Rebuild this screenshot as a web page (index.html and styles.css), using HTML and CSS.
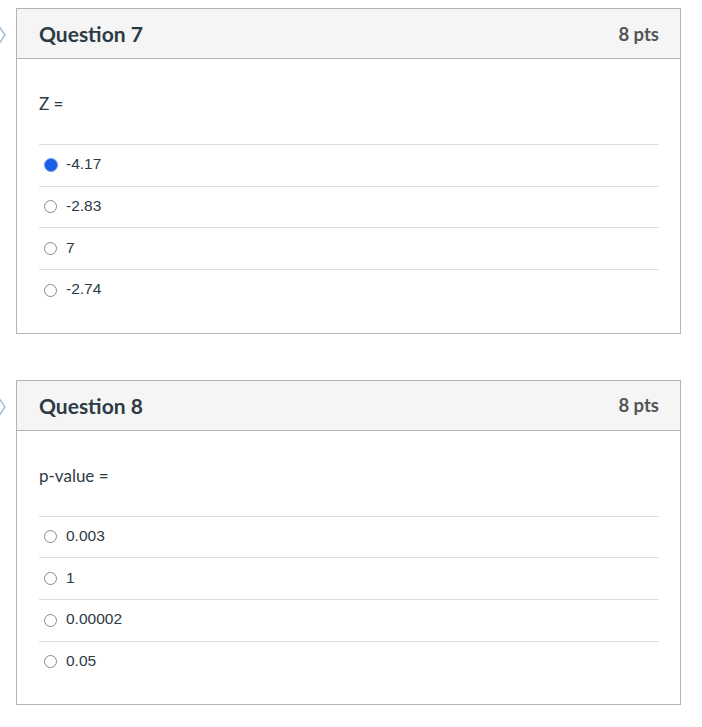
FILE: index.html
```html
<!DOCTYPE html>
<html>
<head>
<meta charset="utf-8">
<link rel="stylesheet" href="styles.css">
</head>
<body>
<div class="page">
  <div class="question">
    <svg class="flag" width="8" height="18" viewBox="0 0 8 18"><path d="M0.5 1 L6 9 L0.5 17" fill="none" stroke="#9dbbd6" stroke-width="1.4"/></svg>
    <div class="card">
      <div class="card-head">
        <span class="q-title">Question 7</span>
        <span class="q-pts">8 pts</span>
      </div>
      <div class="card-body">
        <div class="q-text">Z =</div>
        <div class="answers">
          <label class="answer"><span class="radio checked"></span><span class="a-text">-4.17</span></label>
          <label class="answer"><span class="radio"></span><span class="a-text">-2.83</span></label>
          <label class="answer"><span class="radio"></span><span class="a-text">7</span></label>
          <label class="answer"><span class="radio"></span><span class="a-text">-2.74</span></label>
        </div>
      </div>
    </div>
  </div>
  <div class="question">
    <svg class="flag" width="8" height="18" viewBox="0 0 8 18"><path d="M0.5 1 L6 9 L0.5 17" fill="none" stroke="#9dbbd6" stroke-width="1.4"/></svg>
    <div class="card">
      <div class="card-head">
        <span class="q-title">Question 8</span>
        <span class="q-pts">8 pts</span>
      </div>
      <div class="card-body">
        <div class="q-text">p-value =</div>
        <div class="answers">
          <label class="answer"><span class="radio"></span><span class="a-text">0.003</span></label>
          <label class="answer"><span class="radio"></span><span class="a-text">1</span></label>
          <label class="answer"><span class="radio"></span><span class="a-text">0.00002</span></label>
          <label class="answer"><span class="radio"></span><span class="a-text">0.05</span></label>
        </div>
      </div>
    </div>
  </div>
</div>
</body>
</html>
```

FILE: styles.css
```css
html, body {
  margin: 0;
  padding: 0;
  background: #ffffff;
}
.page {
  padding-top: 8px;
  display: flex;
  flex-direction: column;
  gap: 46px;
}
.question {
  position: relative;
  padding-left: 16px;
}
.flag {
  position: absolute;
  left: -1px;
  top: 18px;
}
.card {
  width: 663px;
  border: 1px solid #b4b4b4;
  background: #fff;
}
.card-head {
  height: 49px;
  background: #f5f5f5;
  border-bottom: 1px solid #b4b4b4;
  display: flex;
  align-items: center;
  justify-content: space-between;
  padding: 0 21px 0 22px;
  font-family: Lato, "Liberation Sans", sans-serif;
  font-weight: 700;
}
.q-title {
  font-size: 21px;
  color: #2d3b45;
}
.q-pts {
  font-size: 18.5px;
  color: #555555;
}
.card-body {
  padding: 0 21px 22px 22px;
}
.q-text {
  font-family: Lato, "Liberation Sans", sans-serif;
  font-size: 17px;
  line-height: 24px;
  color: #2d3b45;
  padding: 33px 0 28px;
}
.answers {
  display: flex;
  flex-direction: column;
}
.answer {
  height: 40.67px;
  border-top: 1px solid #dddddd;
  display: flex;
  align-items: center;
  gap: 9px;
  padding-left: 5px;
  font-family: "Liberation Sans", Arial, sans-serif;
  font-size: 15.5px;
  color: #2d3b45;
}
.radio {
  width: 11px;
  height: 11px;
  border: 1px solid #8a8a8a;
  border-radius: 50%;
  box-sizing: content-box;
  background: #fff;
  flex: none;
}
.radio.checked {
  width: 12px;
  height: 12px;
  margin-left: -0.5px;
  margin-right: -0.5px;
  border: 1px solid #6f9cf2;
  background: #1a5fe6;
}
.a-text {
  line-height: 18px;
  margin-top: -2px;
}
```
